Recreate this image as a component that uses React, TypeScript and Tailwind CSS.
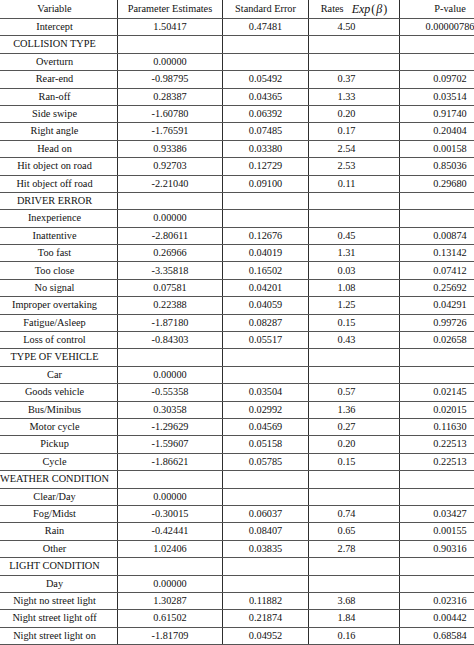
import React from 'react';

type Row =
  | { kind: 'section'; label: string }
  | { kind: 'data'; label: string; est: string; se?: string; rate?: string; p?: string };

const s = (label: string): Row => ({ kind: 'section', label });
const d = (label: string, est: string, se = '', rate = '', p = ''): Row => ({
  kind: 'data',
  label,
  est,
  se,
  rate,
  p,
});

const rows: Row[] = [
  d('Intercept', '1.50417', '0.47481', '4.50', '0.00000786'),
  s('COLLISION TYPE'),
  d('Overturn', '0.00000'),
  d('Rear-end', '-0.98795', '0.05492', '0.37', '0.09702'),
  d('Ran-off', '0.28387', '0.04365', '1.33', '0.03514'),
  d('Side swipe', '-1.60780', '0.06392', '0.20', '0.91740'),
  d('Right angle', '-1.76591', '0.07485', '0.17', '0.20404'),
  d('Head on', '0.93386', '0.03380', '2.54', '0.00158'),
  d('Hit object on road', '0.92703', '0.12729', '2.53', '0.85036'),
  d('Hit object off road', '-2.21040', '0.09100', '0.11', '0.29680'),
  s('DRIVER ERROR'),
  d('Inexperience', '0.00000'),
  d('Inattentive', '-2.80611', '0.12676', '0.45', '0.00874'),
  d('Too fast', '0.26966', '0.04019', '1.31', '0.13142'),
  d('Too close', '-3.35818', '0.16502', '0.03', '0.07412'),
  d('No signal', '0.07581', '0.04201', '1.08', '0.25692'),
  d('Improper overtaking', '0.22388', '0.04059', '1.25', '0.04291'),
  d('Fatigue/Asleep', '-1.87180', '0.08287', '0.15', '0.99726'),
  d('Loss of control', '-0.84303', '0.05517', '0.43', '0.02658'),
  s('TYPE OF VEHICLE'),
  d('Car', '0.00000'),
  d('Goods vehicle', '-0.55358', '0.03504', '0.57', '0.02145'),
  d('Bus/Minibus', '0.30358', '0.02992', '1.36', '0.02015'),
  d('Motor cycle', '-1.29629', '0.04569', '0.27', '0.11630'),
  d('Pickup', '-1.59607', '0.05158', '0.20', '0.22513'),
  d('Cycle', '-1.86621', '0.05785', '0.15', '0.22513'),
  s('WEATHER CONDITION'),
  d('Clear/Day', '0.00000'),
  d('Fog/Midst', '-0.30015', '0.06037', '0.74', '0.03427'),
  d('Rain', '-0.42441', '0.08407', '0.65', '0.00155'),
  d('Other', '1.02406', '0.03835', '2.78', '0.90316'),
  s('LIGHT CONDITION'),
  d('Day', '0.00000'),
  d('Night no street light', '1.30287', '0.11882', '3.68', '0.02316'),
  d('Night street light off', '0.61502', '0.21874', '1.84', '0.00442'),
  d('Night street light on', '-1.81709', '0.04952', '0.16', '0.68584'),
];

const cell = 'flex items-center justify-center border-r border-[#2e2e2e] whitespace-nowrap';

function TableRow({ row }: { row: Row }) {
  const isData = row.kind === 'data';
  return (
    <div className="flex h-[17.4px] border-b border-[#555]">
      <div className={`${cell} w-[118px] pr-[8px]`}>{row.label}</div>
      <div className={`${cell} w-[105px]`}>{isData ? row.est : ''}</div>
      <div className={`${cell} w-[86px]`}>{isData ? row.se : ''}</div>
      <div className={`${cell} w-[91px] pr-[15px]`}>{isData ? row.rate : ''}</div>
      <div className={`${cell} w-[100px] border-r-0`}>{isData ? row.p : ''}</div>
    </div>
  );
}

export default function App() {
  return (
    <div className="w-[474px] h-[645px] overflow-hidden bg-white">
      <div
        className="w-[500px] text-[10.3px] leading-none text-[#111]"
        style={{ fontFamily: '"Liberation Serif", "Times New Roman", serif' }}
      >
        <div className="flex h-[19px] border-b border-[#555]">
          <div className={`${cell} w-[118px] pr-[8px]`}>Variable</div>
          <div className={`${cell} w-[105px]`}>Parameter Estimates</div>
          <div className={`${cell} w-[86px]`}>Standard Error</div>
          <div className={`${cell} w-[91px] gap-[8px]`}>
            <span>Rates</span>
            <span className="text-[12px] italic">
              Exp<span className="not-italic pl-[1px]">(</span>
              <span className="px-[1px]">β</span>
              <span className="not-italic">)</span>
            </span>
          </div>
          <div className={`${cell} w-[100px] border-r-0`}>P-value</div>
        </div>
        {rows.map((row, i) => (
          <TableRow key={i} row={row} />
        ))}
      </div>
    </div>
  );
}
